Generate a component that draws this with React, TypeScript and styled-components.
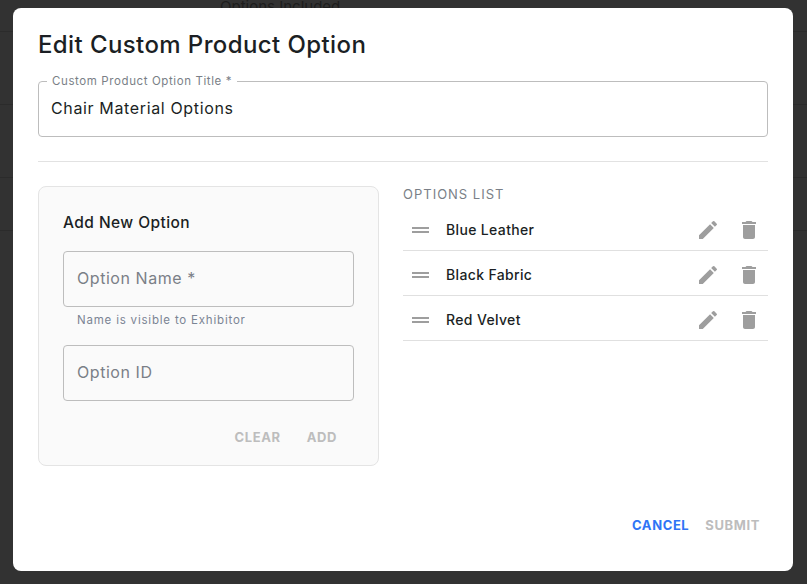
import React from 'react';
import styled, { createGlobalStyle } from 'styled-components';

const GlobalStyle = createGlobalStyle`
  html, body {
    margin: 0;
    padding: 0;
    height: 100%;
    background: #323232;
    overflow: hidden;
  }
  #root {
    height: 100%;
  }
  * {
    box-sizing: border-box;
  }
`;

const Page = styled.div`
  position: relative;
  width: 807px;
  height: 584px;
  background: #323232;
  overflow: hidden;
  font-family: Inter, 'Liberation Sans', sans-serif;
`;

const PageHeading = styled.div`
  height: 32px;
  padding-left: 220px;
  font-size: 15px;
  line-height: 14px;
  color: #1d1d1d;
  border-bottom: 1px solid #2b2b2b;
`;

const PageRow = styled.div<{ $height: number }>`
  height: ${p => p.$height}px;
  border-bottom: 1px solid #2b2b2b;
`;

const Dialog = styled.div`
  position: absolute;
  left: 13px;
  top: 8px;
  width: 780px;
  height: 563px;
  padding: 20px 25px 0;
  background: #ffffff;
  border-radius: 8px;
  display: flex;
  flex-direction: column;
`;

const Title = styled.h2`
  margin: 0;
  font-size: 24px;
  line-height: 34px;
  font-weight: 500;
  color: #1b1f24;
  letter-spacing: 0.4px;
`;

const OutlinedField = styled.div`
  position: relative;
  margin-top: 19px;
  height: 56px;
  padding: 0 12px 2px;
  display: flex;
  align-items: center;
  border: 1px solid #bdbdbd;
  border-radius: 4px;
  font-size: 16px;
  letter-spacing: 0.64px;
  color: #1b1f24;
`;

const FloatingLabel = styled.span`
  position: absolute;
  left: 8px;
  top: -8px;
  padding: 0 5px;
  background: #ffffff;
  font-size: 11.5px;
  line-height: 14px;
  letter-spacing: 0.6px;
  color: #7a7f87;
`;

const Divider = styled.hr`
  margin: 24px 0 24px;
  border: 0;
  border-top: 1px solid #e2e2e2;
`;

const Columns = styled.div`
  display: flex;
  gap: 24px;
  align-items: flex-start;
`;

const FormCard = styled.div`
  width: 341px;
  height: 280px;
  padding: 24px 24px 0;
  flex: none;
  background: #fafafa;
  border: 1px solid #e4e4e4;
  border-radius: 8px;
`;

const CardTitle = styled.h3`
  margin: 0;
  font-size: 15.5px;
  line-height: 24px;
  font-weight: 500;
  letter-spacing: 0.43px;
  color: #1b1f24;
`;

const InputBox = styled.div<{ $gap: number }>`
  margin-top: ${p => p.$gap}px;
  height: 56px;
  padding: 0 13px 2px;
  display: flex;
  align-items: center;
  border: 1px solid #bdbdbd;
  border-radius: 4px;
  font-size: 16px;
  letter-spacing: 0.55px;
  color: #7a7f87;
`;

const HelperText = styled.div`
  margin: 5px 0 0 14px;
  font-size: 11.5px;
  line-height: 16px;
  letter-spacing: 0.8px;
  color: #7a8494;
`;

const CardActions = styled.div`
  margin-top: 26px;
  padding-right: 17px;
  display: flex;
  justify-content: flex-end;
  gap: 26px;
`;

const TextButton = styled.button<{ $primary?: boolean }>`
  padding: 0;
  border: 0;
  background: none;
  font-family: inherit;
  font-size: 13px;
  line-height: 20px;
  font-weight: 700;
  letter-spacing: 0.6px;
  color: ${p => (p.$primary ? '#2f74f6' : '#bdbdbd')};
`;

const ListColumn = styled.div`
  flex: 1;
`;

const ListHeading = styled.div`
  margin-top: -1px;
  font-size: 13px;
  line-height: 18px;
  letter-spacing: 1px;
  color: #7a7f87;
`;

const OptionList = styled.ul`
  list-style: none;
  margin: 3px 0 0;
  padding: 0;
`;

const OptionRow = styled.li`
  height: 45px;
  padding: 4px 7px 0 9px;
  display: flex;
  align-items: center;
  border-bottom: 1px solid #e0e0e0;
`;

const OptionName = styled.span`
  margin: 0 0 2px 17px;
  flex: 1;
  font-size: 14px;
  font-weight: 500;
  letter-spacing: 0.35px;
  color: #1b1f24;
`;

const IconSlot = styled.svg<{ $gap?: number; $width?: number }>`
  width: ${p => p.$width ?? 24}px;
  height: 24px;
  flex: none;
  margin-left: ${p => p.$gap ?? 0}px;
  fill: #9e9e9e;
`;

const Footer = styled.div`
  margin-top: 49px;
  padding-right: 8px;
  display: flex;
  justify-content: flex-end;
  gap: 16px;
`;

const DragIcon = () => (
  <IconSlot viewBox="0 0 17 24" $width={17}>
    <rect x="0" y="9" width="17" height="2" />
    <rect x="0" y="13" width="17" height="2" />
  </IconSlot>
);

const EditIcon = () => (
  <IconSlot viewBox="0 0 24 24">
    <path d="M3 17.25V21h3.75L17.81 9.94l-3.75-3.75L3 17.25zM20.71 7.04a1 1 0 0 0 0-1.41l-2.34-2.34a1 1 0 0 0-1.41 0l-1.83 1.83 3.75 3.75 1.83-1.83z" />
  </IconSlot>
);

const TrashIcon = () => (
  <IconSlot viewBox="0 0 24 24" $gap={17}>
    <path d="M6 19c0 1.1.9 2 2 2h8c1.1 0 2-.9 2-2V7H6v12zM19 4h-3.5l-1-1h-5l-1 1H5v2h14V4z" />
  </IconSlot>
);

const options = ['Blue Leather', 'Black Fabric', 'Red Velvet'];

export default function App() {
  return (
    <Page>
      <GlobalStyle />
      <PageHeading>Options Included</PageHeading>
      <PageRow $height={73} />
      <PageRow $height={73} />
      <PageRow $height={53} />
      <Dialog>
        <Title>Edit Custom Product Option</Title>
        <OutlinedField>
          <FloatingLabel>Custom Product Option Title *</FloatingLabel>
          Chair Material Options
        </OutlinedField>
        <Divider />
        <Columns>
          <FormCard>
            <CardTitle>Add New Option</CardTitle>
            <InputBox $gap={16}>Option Name *</InputBox>
            <HelperText>Name is visible to Exhibitor</HelperText>
            <InputBox $gap={17}>Option ID</InputBox>
            <CardActions>
              <TextButton>CLEAR</TextButton>
              <TextButton>ADD</TextButton>
            </CardActions>
          </FormCard>
          <ListColumn>
            <ListHeading>OPTIONS LIST</ListHeading>
            <OptionList>
              {options.map(name => (
                <OptionRow key={name}>
                  <DragIcon />
                  <OptionName>{name}</OptionName>
                  <EditIcon />
                  <TrashIcon />
                </OptionRow>
              ))}
            </OptionList>
          </ListColumn>
        </Columns>
        <Footer>
          <TextButton $primary>CANCEL</TextButton>
          <TextButton>SUBMIT</TextButton>
        </Footer>
      </Dialog>
    </Page>
  );
}
